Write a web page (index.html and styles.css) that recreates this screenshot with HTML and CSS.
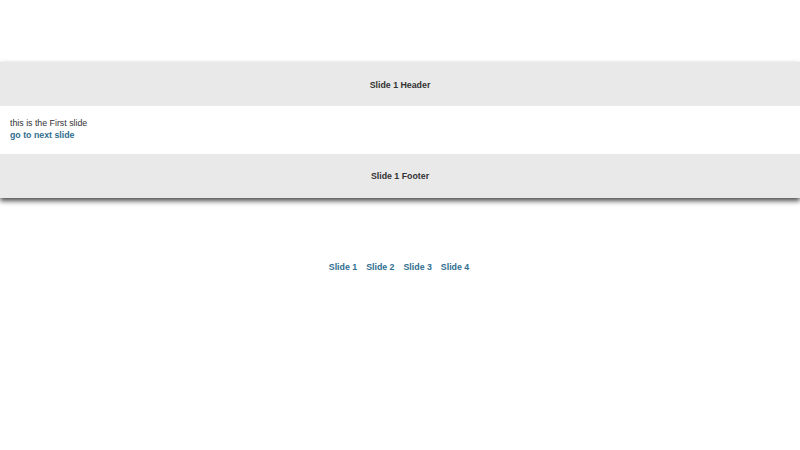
FILE: index.html
```html
<!DOCTYPE html>
<html>
<head>
<meta charset="utf-8">
<link rel="stylesheet" href="styles.css">
</head>
<body>
<div class="page">
  <div class="bar header">Slide 1 Header</div>
  <div class="content">
    <div>this is the First slide</div>
    <a href="#" class="link">go to next slide</a>
  </div>
  <div class="bar footer">Slide 1 Footer</div>
</div>
<nav class="nav">
  <a href="#" class="link">Slide 1</a>
  <a href="#" class="link">Slide 2</a>
  <a href="#" class="link">Slide 3</a>
  <a href="#" class="link">Slide 4</a>
</nav>
</body>
</html>
```
FILE: styles.css
```css
html, body {
  margin: 0;
  padding: 0;
  background: #ffffff;
}
body {
  font-family: "Liberation Sans", Arial, sans-serif;
  font-size: 8.8px;
  color: #333333;
}
.page {
  margin-top: 62px;
  box-shadow: 0 3px 5px rgba(0, 0, 0, 0.7);
}
.bar {
  box-sizing: border-box;
  height: 44px;
  display: flex;
  align-items: center;
  justify-content: center;
  background: #e9e9e9;
  font-weight: bold;
  color: #333333;
}
.header {
  padding-top: 1px;
}
.content {
  background: #ffffff;
  padding: 11px 10px 13px;
  line-height: 12px;
}
.link {
  color: #2f6e8f;
  font-weight: bold;
  text-decoration: none;
  display: block;
}
.nav {
  margin-top: 63px;
  padding-right: 2px;
  display: flex;
  justify-content: center;
  gap: 9px;
  line-height: 12px;
}
.nav .link {
  display: inline;
}
```
